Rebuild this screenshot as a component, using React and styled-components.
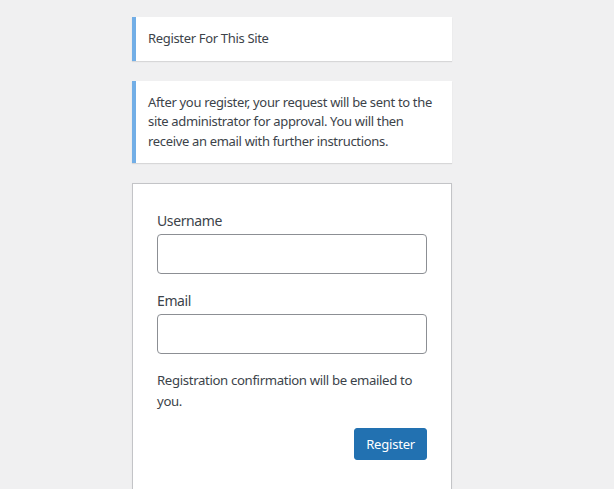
import React from "react";
import styled, { createGlobalStyle } from "styled-components";

const Global = createGlobalStyle`
  html, body {
    margin: 0;
    padding: 0;
    background: #f0f0f1;
  }
  body {
    font-family: "Noto Sans", "Open Sans", sans-serif;
    font-size: 13px;
    color: #3c434a;
  }
  * { box-sizing: border-box; }
`;

const Page = styled.div`
  padding: 17px 0 0 132px;
`;

const Login = styled.div`
  width: 320px;
  display: flex;
  flex-direction: column;
`;

const Notice = styled.p`
  margin: 0 0 20px;
  padding: 12px;
  background: #fff;
  border-left: 4px solid #72aee6;
  box-shadow: 0 1px 1px 0 rgba(0, 0, 0, 0.1);
  font-size: 13px;
  line-height: 19.5px;
  letter-spacing: -0.33px;
`;

const Form = styled.form`
  margin: 0;
  padding: 26px 24px 46px;
  background: #fff;
  border: 1px solid #c3c4c7;
  box-shadow: 0 1px 3px rgba(0, 0, 0, 0.04);
  display: flex;
  flex-direction: column;
`;

const Label = styled.label`
  font-size: 14px;
  line-height: 21px;
  margin-bottom: 3px;
  letter-spacing: -0.4px;
`;

const Input = styled.input`
  width: 100%;
  height: 40px;
  margin: 0 0 16px;
  padding: 3px 5px;
  font-size: 24px;
  border: 1px solid #8c8f94;
  border-radius: 4px;
  background: #fff;
  outline: none;
`;

const Hint = styled.p`
  margin: 0 0 16px;
  font-size: 13.2px;
  line-height: 21px;
  letter-spacing: -0.35px;
`;

const Actions = styled.div`
  display: flex;
  justify-content: flex-end;
`;

const Button = styled.button`
  height: 32px;
  padding: 0 11px;
  background: #2271b1;
  border: 1px solid #2271b1;
  border-radius: 3px;
  color: #fff;
  font-family: inherit;
  font-size: 13px;
  letter-spacing: -0.2px;
  cursor: pointer;
`;

export default function App() {
  return (
    <>
      <Global />
      <Page>
        <Login>
          <Notice>Register For This Site</Notice>
          <Notice>
            After you register, your request will be sent to the site
            administrator for approval. You will then receive an email with
            further instructions.
          </Notice>
          <Form onSubmit={(e) => e.preventDefault()}>
            <Label htmlFor="user_login">Username</Label>
            <Input id="user_login" type="text" />
            <Label htmlFor="user_email">Email</Label>
            <Input id="user_email" type="email" />
            <Hint>Registration confirmation will be emailed to you.</Hint>
            <Actions>
              <Button type="submit">Register</Button>
            </Actions>
          </Form>
        </Login>
      </Page>
    </>
  );
}
